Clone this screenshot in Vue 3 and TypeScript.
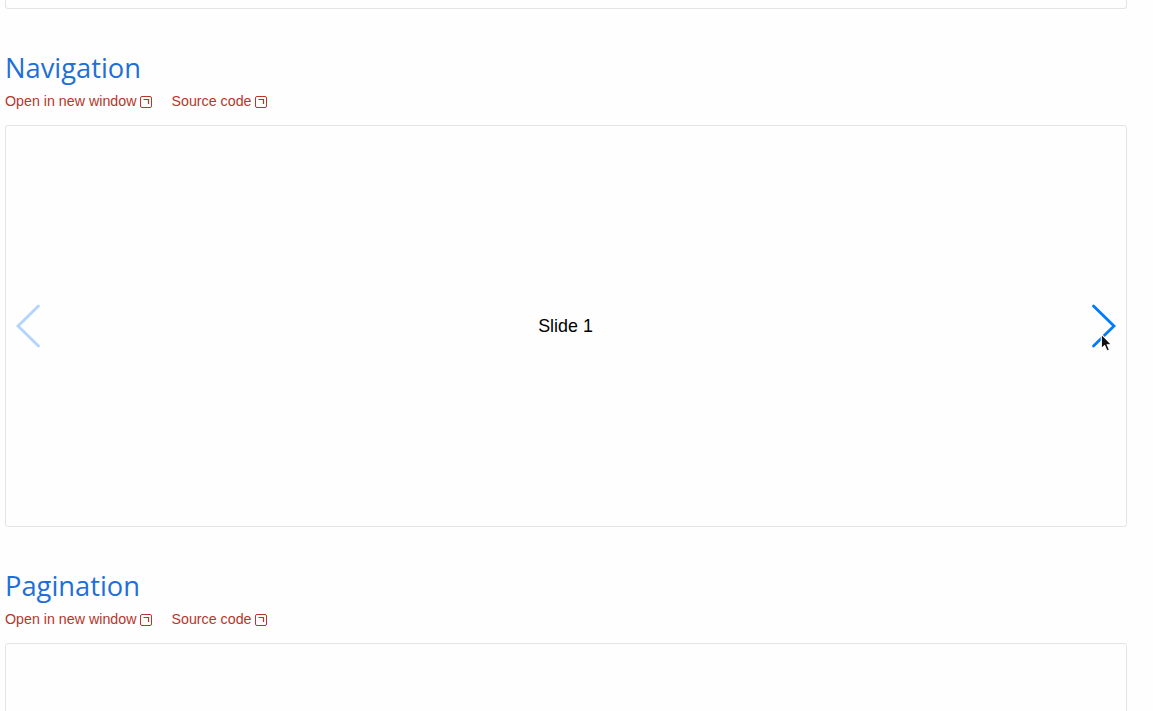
<script setup lang="ts">
interface Section { title: string; slide: boolean }
const sections: Section[] = [
  { title: 'Navigation', slide: true },
  { title: 'Pagination', slide: false },
]
</script>

<template>
  <main class="page">
    <div class="prev-end"></div>
    <section v-for="s in sections" :key="s.title" class="demo">
      <h2 class="title">{{ s.title }}</h2>
      <div class="links">
        <a class="link">Open in new window<svg class="ext" viewBox="0 0 12 12" width="12" height="12"><rect x="0.5" y="0.5" width="11" height="11" rx="1.5" fill="none" stroke="#b8352b"/><path d="M3.5 3.5H8.5V8" fill="none" stroke="#b8352b" stroke-width="1.2"/></svg></a>
        <a class="link">Source code<svg class="ext" viewBox="0 0 12 12" width="12" height="12"><rect x="0.5" y="0.5" width="11" height="11" rx="1.5" fill="none" stroke="#b8352b"/><path d="M3.5 3.5H8.5V8" fill="none" stroke="#b8352b" stroke-width="1.2"/></svg></a>
      </div>
      <div class="frame" :class="{ cut: !s.slide }">
        <template v-if="s.slide">
          <svg class="arrow left" viewBox="0 0 27 44" width="27" height="44"><path d="M23.5 2 L3 22 L23.5 42" fill="none" stroke="#b3d4ff" stroke-width="2.8" stroke-linecap="round"/></svg>
          <span class="slide">Slide 1</span>
          <svg class="arrow right" viewBox="0 0 27 44" width="27" height="44"><path d="M3.5 2 L24 22 L3.5 42" fill="none" stroke="#007aff" stroke-width="2.8" stroke-linecap="round"/></svg>
          <svg class="cursor" viewBox="0 0 12 17" width="15" height="21"><path d="M1 1 L1 12.5 L3.7 10.2 L5.6 14.6 L7.6 13.7 L5.8 9.6 L9.2 9.4 Z" fill="#111" stroke="#fff" stroke-width="0.9"/></svg>
        </template>
      </div>
    </section>
  </main>
</template>

<style scoped>
.page {
  width: 1122px;
  margin-left: 5px;
  height: 711px;
  overflow: hidden;
  font-family: "Liberation Sans", Arial, sans-serif;
}
.prev-end {
  height: 9px;
  box-sizing: border-box;
  border: 1px solid #e4e4e4;
  border-top: none;
  border-radius: 0 0 3px 3px;
}
.demo {
  margin-top: 40px;
}
.title {
  margin: 0;
  font-family: "Open Sans", sans-serif;
  font-weight: 400;
  font-size: 27.3px;
  line-height: 38px;
  color: #1f6fd6;
}
.links {
  display: flex;
  gap: 20px;
  margin-top: 6px;
  height: 17px;
  line-height: 17px;
  font-size: 14.25px;
  color: #b8352b;
}
.link {
  display: flex;
  align-items: center;
  gap: 3px;
}
.ext {
  flex: none;
}
.frame {
  position: relative;
  margin-top: 15px;
  height: 402px;
  box-sizing: border-box;
  border: 1px solid #e4e4e4;
  border-radius: 3px;
  display: flex;
  align-items: center;
  justify-content: center;
}
.slide {
  font-size: 17.9px;
  color: #000;
  margin-right: 1px;
}
.arrow {
  position: absolute;
  top: 178px;
}
.left { left: 9px; }
.right { right: 9px; }
.cursor {
  position: absolute;
  right: 11px;
  top: 207px;
}
</style>

<style>
html, body { background: #fefefe; overflow: hidden; }
</style>
